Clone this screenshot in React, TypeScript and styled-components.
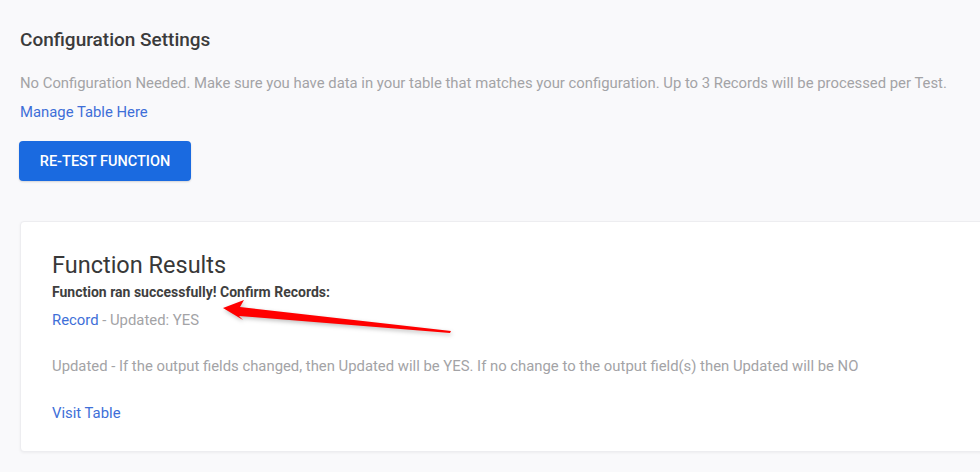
import React from "react";
import styled, { createGlobalStyle } from "styled-components";

const GlobalStyle = createGlobalStyle`
  html, body {
    margin: 0;
    padding: 0;
    background: #f9f9fb;
    font-family: Roboto, "Liberation Sans", Arial, sans-serif;
    overflow: hidden;
  }
`;

const Page = styled.div`
  position: relative;
  width: 980px;
  height: 472px;
  overflow: hidden;
  padding: 28px 0 0 20px;
  box-sizing: border-box;
  background: #f9f9fb;
`;

const Heading = styled.h2`
  margin: 0;
  font-size: 19px;
  line-height: 24px;
  font-weight: 500;
  color: #3b3b3b;
`;

const Muted = styled.p<{ $top?: number }>`
  margin: ${(p) => p.$top ?? 0}px 0 0;
  font-size: 14.85px;
  line-height: 20px;
  color: #a3a3a6;
  white-space: nowrap;
`;

const Link = styled.a<{ $top?: number }>`
  display: block;
  margin-top: ${(p) => p.$top ?? 0}px;
  font-size: 14.85px;
  line-height: 20px;
  color: #3e6fd8;
  text-decoration: none;
  cursor: pointer;
`;

const InlineLink = styled.a`
  color: #3e6fd8;
  text-decoration: none;
`;

const Button = styled.button`
  display: flex;
  align-items: center;
  justify-content: center;
  margin: 19px 0 0 -1px;
  width: 172px;
  height: 40px;
  border: none;
  border-radius: 4px;
  background: #1a6ae0;
  color: #fff;
  font-family: inherit;
  font-size: 14.5px;
  font-weight: 500;
  box-shadow: 0 1px 2px rgba(0, 0, 0, 0.15);
  cursor: pointer;
`;

const Card = styled.section`
  margin-top: 40px;
  width: 1000px;
  box-sizing: border-box;
  background: #fff;
  border: 1px solid #ededf0;
  border-radius: 4px;
  box-shadow: 0 1px 3px rgba(0, 0, 0, 0.05);
  padding: 29px 32px 28px 31px;
`;

const CardTitle = styled.h3`
  margin: 0;
  font-size: 23.5px;
  line-height: 28px;
  font-weight: 400;
  color: #383838;
`;

const Strong = styled.p`
  margin: 4px 0 0;
  font-size: 14px;
  line-height: 18px;
  font-weight: 700;
  color: #3f3f3f;
`;

const Arrow = styled.svg`
  position: absolute;
  left: 0;
  top: 0;
  pointer-events: none;
  filter: drop-shadow(1px 2px 2px rgba(0, 0, 0, 0.25));
`;

export default function App() {
  return (
    <>
      <GlobalStyle />
      <Page>
        <Heading>Configuration Settings</Heading>
        <Muted $top={21}>
          No Configuration Needed. Make sure you have data in your table that matches your configuration. Up to 3 Records will be processed per Test.
        </Muted>
        <Link $top={9}>Manage Table Here</Link>
        <Button>RE-TEST FUNCTION</Button>
        <Card>
          <CardTitle>Function Results</CardTitle>
          <Strong>Function ran successfully! Confirm Records:</Strong>
          <Muted $top={9}>
            <InlineLink>Record</InlineLink> - Updated: YES
          </Muted>
          <Muted $top={26}>
            Updated - If the output fields changed, then Updated will be YES. If no change to the output field(s) then Updated will be NO
          </Muted>
          <Link $top={27}>Visit Table</Link>
        </Card>
        <Arrow width="980" height="472" viewBox="0 0 980 472">
          <polygon
            points="223,308 244,300 240,307 451,331 450,333 239,316 243,320"
            fill="#ff0000"
          />
        </Arrow>
      </Page>
    </>
  );
}
